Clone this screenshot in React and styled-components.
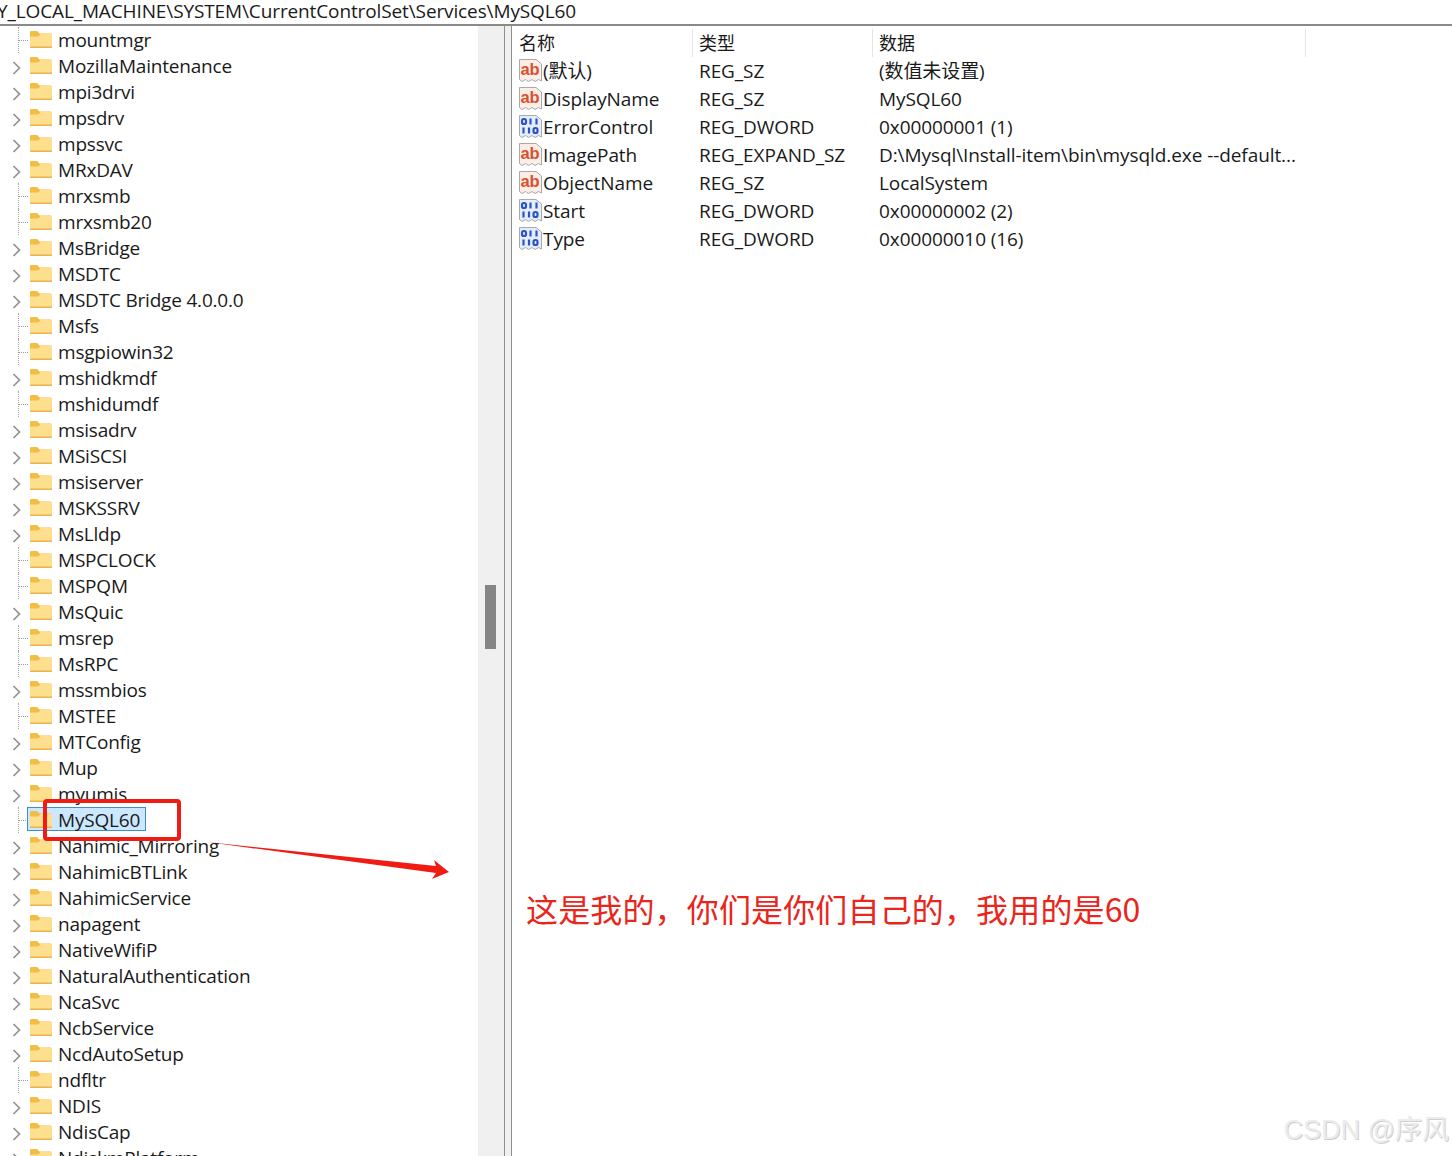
import React from "react";
import styled, { createGlobalStyle } from "styled-components";

const treeItems = [
	["mountmgr", false],
	["MozillaMaintenance", true],
	["mpi3drvi", true],
	["mpsdrv", true],
	["mpssvc", true],
	["MRxDAV", true],
	["mrxsmb", false],
	["mrxsmb20", false],
	["MsBridge", true],
	["MSDTC", true],
	["MSDTC Bridge 4.0.0.0", true],
	["Msfs", false],
	["msgpiowin32", false],
	["mshidkmdf", true],
	["mshidumdf", false],
	["msisadrv", true],
	["MSiSCSI", true],
	["msiserver", true],
	["MSKSSRV", true],
	["MsLldp", true],
	["MSPCLOCK", false],
	["MSPQM", false],
	["MsQuic", true],
	["msrep", false],
	["MsRPC", false],
	["mssmbios", true],
	["MSTEE", false],
	["MTConfig", true],
	["Mup", true],
	["myumis", true],
	["MySQL60", false, true],
	["Nahimic_Mirroring", true],
	["NahimicBTLink", true],
	["NahimicService", true],
	["napagent", true],
	["NativeWifiP", true],
	["NaturalAuthentication", true],
	["NcaSvc", true],
	["NcbService", true],
	["NcdAutoSetup", true],
	["ndfltr", false],
	["NDIS", true],
	["NdisCap", true],
	["NdiskmPlatform", true],
];

const values = [
	["ab", "(默认)", "REG_SZ", "(数值未设置)"],
	["ab", "DisplayName", "REG_SZ", "MySQL60"],
	["bin", "ErrorControl", "REG_DWORD", "0x00000001 (1)"],
	["ab", "ImagePath", "REG_EXPAND_SZ", "D:\\Mysql\\Install-item\\bin\\mysqld.exe --default..."],
	["ab", "ObjectName", "REG_SZ", "LocalSystem"],
	["bin", "Start", "REG_DWORD", "0x00000002 (2)"],
	["bin", "Type", "REG_DWORD", "0x00000010 (16)"],
];

const GlobalStyle = createGlobalStyle`
	html, body {
		margin: 0;
		padding: 0;
		background: #fff;
	}
	body {
		font-family: "Open Sans", "Noto Sans", "Noto Sans CJK SC", sans-serif;
		color: #1a1a1a;
	}
`;

const Window = styled.div`
	position: relative;
	width: 1452px;
	height: 1156px;
	overflow: hidden;
	display: flex;
	flex-direction: column;
`;

const PathBar = styled.div`
	height: 24px;
	line-height: 22px;
	font-size: 19px;
	white-space: nowrap;
	letter-spacing: -0.12px;
	margin-left: -3px;
	border-bottom: 2px solid #8a8a8a;
	flex: none;
`;

const Panes = styled.div`
	flex: 1;
	display: flex;
	min-height: 0;
`;

const Tree = styled.div`
	width: 478px;
	flex: none;
	padding-top: 1px;
	overflow: hidden;
`;

const Row = styled.div`
	position: relative;
	display: flex;
	align-items: center;
	height: 26px;
	padding-left: 30px;
	font-size: 19px;
	letter-spacing: -0.2px;
	white-space: nowrap;
`;

const Dots = styled.span`
	position: absolute;
	left: 18px;
	top: 13px;
	width: 10px;
	border-top: 1px dotted #9a9a9a;
`;

const DotsDown = styled.span`
	position: absolute;
	left: 18px;
	top: 0;
	height: 26px;
	border-left: 1px dotted #a8a8a8;
`;

const Chevron = styled.svg`
	position: absolute;
	left: 12px;
	top: 8px;
	width: 9px;
	height: 14px;
	background: #fff;
`;

const Folder = styled.svg`
	width: 22px;
	height: 20px;
	flex: none;
	margin-right: 6px;
`;

const Label = styled.span`
	line-height: 24px;
`;

const SelectedBox = styled.span`
	position: absolute;
	left: 27px;
	top: 0;
	width: 119px;
	height: 24px;
	background: #cce8ff;
	border: 1px solid #3f8fc4;
	box-sizing: border-box;
`;

const RowContent = styled.span`
	position: relative;
	display: flex;
	align-items: center;
`;

const ScrollTrack = styled.div`
	width: 26px;
	flex: none;
	background: #f0f0f0;
	padding: 559px 8px 0 7px;
	box-sizing: border-box;
`;

const ScrollThumb = styled.div`
	height: 64px;
	background: #858585;
`;

const Splitter = styled.div`
	width: 6px;
	flex: none;
	background: #f0f0f0;
	border-left: 1px solid #8e8e8e;
	border-right: 1px solid #8e8e8e;
`;

const ValuePane = styled.div`
	flex: 1;
	min-width: 0;
	padding-top: 3px;
`;

const HeaderRow = styled.div`
	display: grid;
	grid-template-columns: 180px 180px 433px;
	height: 28px;
	margin-left: 1px;
	font-size: 18px;
`;

const HeaderCell = styled.div`
	padding-left: 6px;
	line-height: 28px;
	border-right: 1px solid #e5e5e5;
	height: 28px;
	box-sizing: border-box;
`;

const ValueRow = styled.div`
	display: grid;
	grid-template-columns: 180px 180px 433px;
	height: 28px;
	margin-left: 1px;
	font-size: 19px;
	letter-spacing: -0.08px;
	line-height: 28px;
	white-space: nowrap;
`;

const NameCell = styled.div`
	display: flex;
	align-items: center;
	padding-left: 5px;
`;

const DataCell = styled.div`
	padding-left: 6px;
	overflow: hidden;
`;

const RegIcon = styled.svg`
	width: 25px;
	height: 26px;
	flex: none;
`;

const RedFrame = styled.div`
	position: absolute;
	left: 43px;
	top: 799px;
	width: 138px;
	height: 42px;
	border: 4px solid #f01c14;
	border-radius: 4px;
	box-sizing: border-box;
`;

const Arrow = styled.svg`
	position: absolute;
	left: 200px;
	top: 835px;
	width: 255px;
	height: 50px;
`;

const Note = styled.div`
	position: absolute;
	left: 526px;
	top: 885px;
	font-size: 32px;
	line-height: 46px;
	letter-spacing: 0.15px;
	color: #e9251c;
	font-family: "Noto Sans CJK SC", "Noto Sans", sans-serif;
	white-space: nowrap;
`;

const Watermark = styled.div`
	position: absolute;
	right: 3px;
	top: 1111px;
	font-size: 27px;
	line-height: 38px;
	color: #ececec;
	text-shadow: 1px 1px 0 #cfcfcf;
	font-family: "Liberation Sans", "Noto Sans CJK SC", sans-serif;
	white-space: nowrap;
`;

const FolderIcon = () => (
	<Folder viewBox="1 1 22 20">
		<path d="M1 3.500C1 2.700 1.600 2 2.400 2H8l2.600 2.600H22v13.200c0 .7-.5 1.200-1.200 1.200H2.200C1.500 19 1 18.500 1 17.800z" fill="#f2bd45" />
		<path d="M1 7.500h8.200l2.600-2.400H23V18c0 .6-.4 1-1 1H2c-.6 0-1-.4-1-1z" fill="#fddf8e" />
		<path d="M1 17.500h22V18c0 .6-.4 1-1 1H2c-.6 0-1-.4-1-1z" fill="#ecb44a" />
	</Folder>
);

const RegistryIcon = ({ kind }) => (
	<RegIcon viewBox="0 0 25 26">
		<path
			d="M1.500 1.500H18l5.500 4.500v17l-3-1.500-3.500 2-3-2-3.500 2-3-2-3.500 2-2.500-2z"
			fill={kind === "ab" ? "#fbeee6" : "#e6eefb"}
			stroke="#a9a9a9"
			strokeWidth="1"
		/>
		{kind === "ab" ? (
			<text x="2.500" y="17" fontSize="16.500" fontWeight="700" fontFamily="Liberation Sans, sans-serif" fill="#d9502f">
				ab
			</text>
		) : (
			<g fill="none" stroke="#2a55c8" strokeWidth="2.200">
				<rect x="4" y="5" width="4" height="5" rx="1.800" />
				<path d="M12.500 4.500v6M18.500 4.500v6" />
				<path d="M5.500 13.500v6M11 13.500v6" />
				<rect x="15.500" y="14" width="4" height="5" rx="1.800" />
			</g>
		)}
	</RegIcon>
);

const TreeRow = ({ name, expandable, selected }) => (
	<Row>
		{expandable ? (
			<Chevron viewBox="0 0 9 14">
				<path d="M1.500 1 7.500 7 1.500 13" fill="none" stroke="#929292" strokeWidth="1.700" />
			</Chevron>
		) : (
			<>
				<DotsDown />
				<Dots />
			</>
		)}
		{selected && <SelectedBox />}
		<RowContent>
			<FolderIcon />
			<Label>{name}</Label>
		</RowContent>
	</Row>
);

const App = () => {
	return (
		<Window>
			<GlobalStyle />
			<PathBar>Y_LOCAL_MACHINE\SYSTEM\CurrentControlSet\Services\MySQL60</PathBar>
			<Panes>
				<Tree>
					{treeItems.map(([name, expandable, selected]) => (
						<TreeRow key={name} name={name} expandable={expandable} selected={selected} />
					))}
				</Tree>
				<ScrollTrack>
					<ScrollThumb />
				</ScrollTrack>
				<Splitter />
				<ValuePane>
					<HeaderRow>
						<HeaderCell>名称</HeaderCell>
						<HeaderCell>类型</HeaderCell>
						<HeaderCell>数据</HeaderCell>
					</HeaderRow>
					{values.map(([kind, name, type, data]) => (
						<ValueRow key={name}>
							<NameCell>
								<RegistryIcon kind={kind} />
								{name}
							</NameCell>
							<DataCell>{type}</DataCell>
							<DataCell>{data}</DataCell>
						</ValueRow>
					))}
				</ValuePane>
			</Panes>
			<RedFrame />
			<Arrow viewBox="0 0 255 50">
				<path d="M7 7 236 31 234 25 249 37 232 44 236 38z" fill="#f01c14" />
			</Arrow>
			<Note>这是我的，你们是你们自己的，我用的是60</Note>
			<Watermark>CSDN @序风</Watermark>
		</Window>
	);
};

export default App;
